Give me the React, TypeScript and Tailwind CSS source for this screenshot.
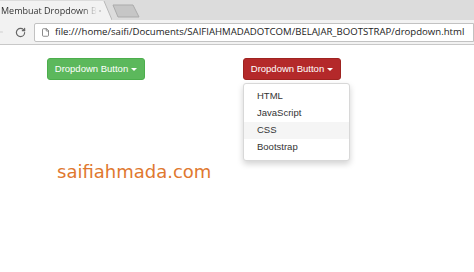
import { RotateCw, ArrowLeft, File, X } from "lucide-react";

const items = ["HTML", "JavaScript", "CSS", "Bootstrap"];

function Caret() {
  return (
    <span className="inline-block ml-[3px] align-middle w-0 h-0 border-t-[3px] border-t-current border-x-[3px] border-x-transparent" />
  );
}

export default function App() {
  return (
    <div className="w-[474px] h-[272px] overflow-hidden bg-white flex flex-col">
      {/* Tab strip */}
      <div className="h-[20px] bg-[#dcdcdc] flex items-end text-[9px] text-[#333] font-['Open_Sans',sans-serif]">
        <div className="h-[19px] w-[104px] bg-[#f2f2f2] flex items-center">
          <span className="flex-1 whitespace-nowrap pl-[1px] [mask-image:linear-gradient(to_right,black_85%,transparent)]">
            Membuat Dropdown B
          </span>
          <X size={8} strokeWidth={3} className="text-[#555] ml-[2px] mr-[3px]" />
        </div>
        <svg width="9" height="19" className="-ml-[1px]">
          <polygon points="0,0 1,0 9,19 0,19" fill="#f2f2f2" />
          <line x1="1" y1="0" x2="9" y2="19" stroke="#b8b8b8" strokeWidth="1" />
        </svg>
        <svg width="28" height="14" className="mb-[2px]">
          <polygon points="1,1 21,1 27,13 6,13" fill="#c6c6c6" stroke="#ababab" strokeWidth="1" />
        </svg>
      </div>

      {/* Toolbar */}
      <div className="h-[25px] bg-[#f2f2f2] border-b border-[#c8c8c8] flex items-center font-['Open_Sans',sans-serif]">
        <ArrowLeft size={12} className="text-[#cfcfcf] -ml-[7px]" />
        <RotateCw size={11} strokeWidth={2.6} className="text-[#666] ml-[10px]" />
        <div className="ml-[8px] flex-1 h-[19px] bg-white border border-[#c2c2c2] rounded-l-[2px] flex items-center pl-[6px] text-[9.6px] text-[#222] whitespace-nowrap">
          <File size={9} className="text-[#666] mr-[5px]" />
          file:///home/saifi/Documents/SAIFIAHMADADOTCOM/BELAJAR_BOOTSTRAP/dropdown.html
        </div>
      </div>

      {/* Page */}
      <div className="flex-1 font-['Liberation_Sans',sans-serif] text-[9.5px]">
        <div className="flex pt-[13px] pl-[47px] gap-[98px]">
          <div className="w-[98px] shrink-0 flex flex-col items-start">
            <button className="h-[22px] w-[98px] rounded-[3px] bg-[#5cb85c] border border-[#4cae4c] text-white">
              Dropdown Button
              <Caret />
            </button>
            <div className="mt-[81px] ml-[10px] text-[18px] leading-[21px] text-[#e0782f] font-['DejaVu_Sans',sans-serif] whitespace-nowrap">
              saifiahmada.com
            </div>
          </div>
          <div className="flex flex-col">
            <button className="h-[22px] w-[98px] rounded-[3px] bg-[#b4292a] border border-[#9e2320] text-white">
              Dropdown Button
              <Caret />
            </button>
            <ul className="mt-[3px] w-[107px] py-[4px] bg-white border border-[#d8d8d8] rounded-[3px] shadow-[0_3px_6px_rgba(0,0,0,0.18)] text-[#333]">
              {items.map((it) => (
                <li
                  key={it}
                  className={
                    "h-[17px] flex items-center pl-[13px] " +
                    (it === "CSS" ? "bg-[#f5f5f5]" : "")
                  }
                >
                  {it}
                </li>
              ))}
            </ul>
          </div>
        </div>
      </div>
    </div>
  );
}
